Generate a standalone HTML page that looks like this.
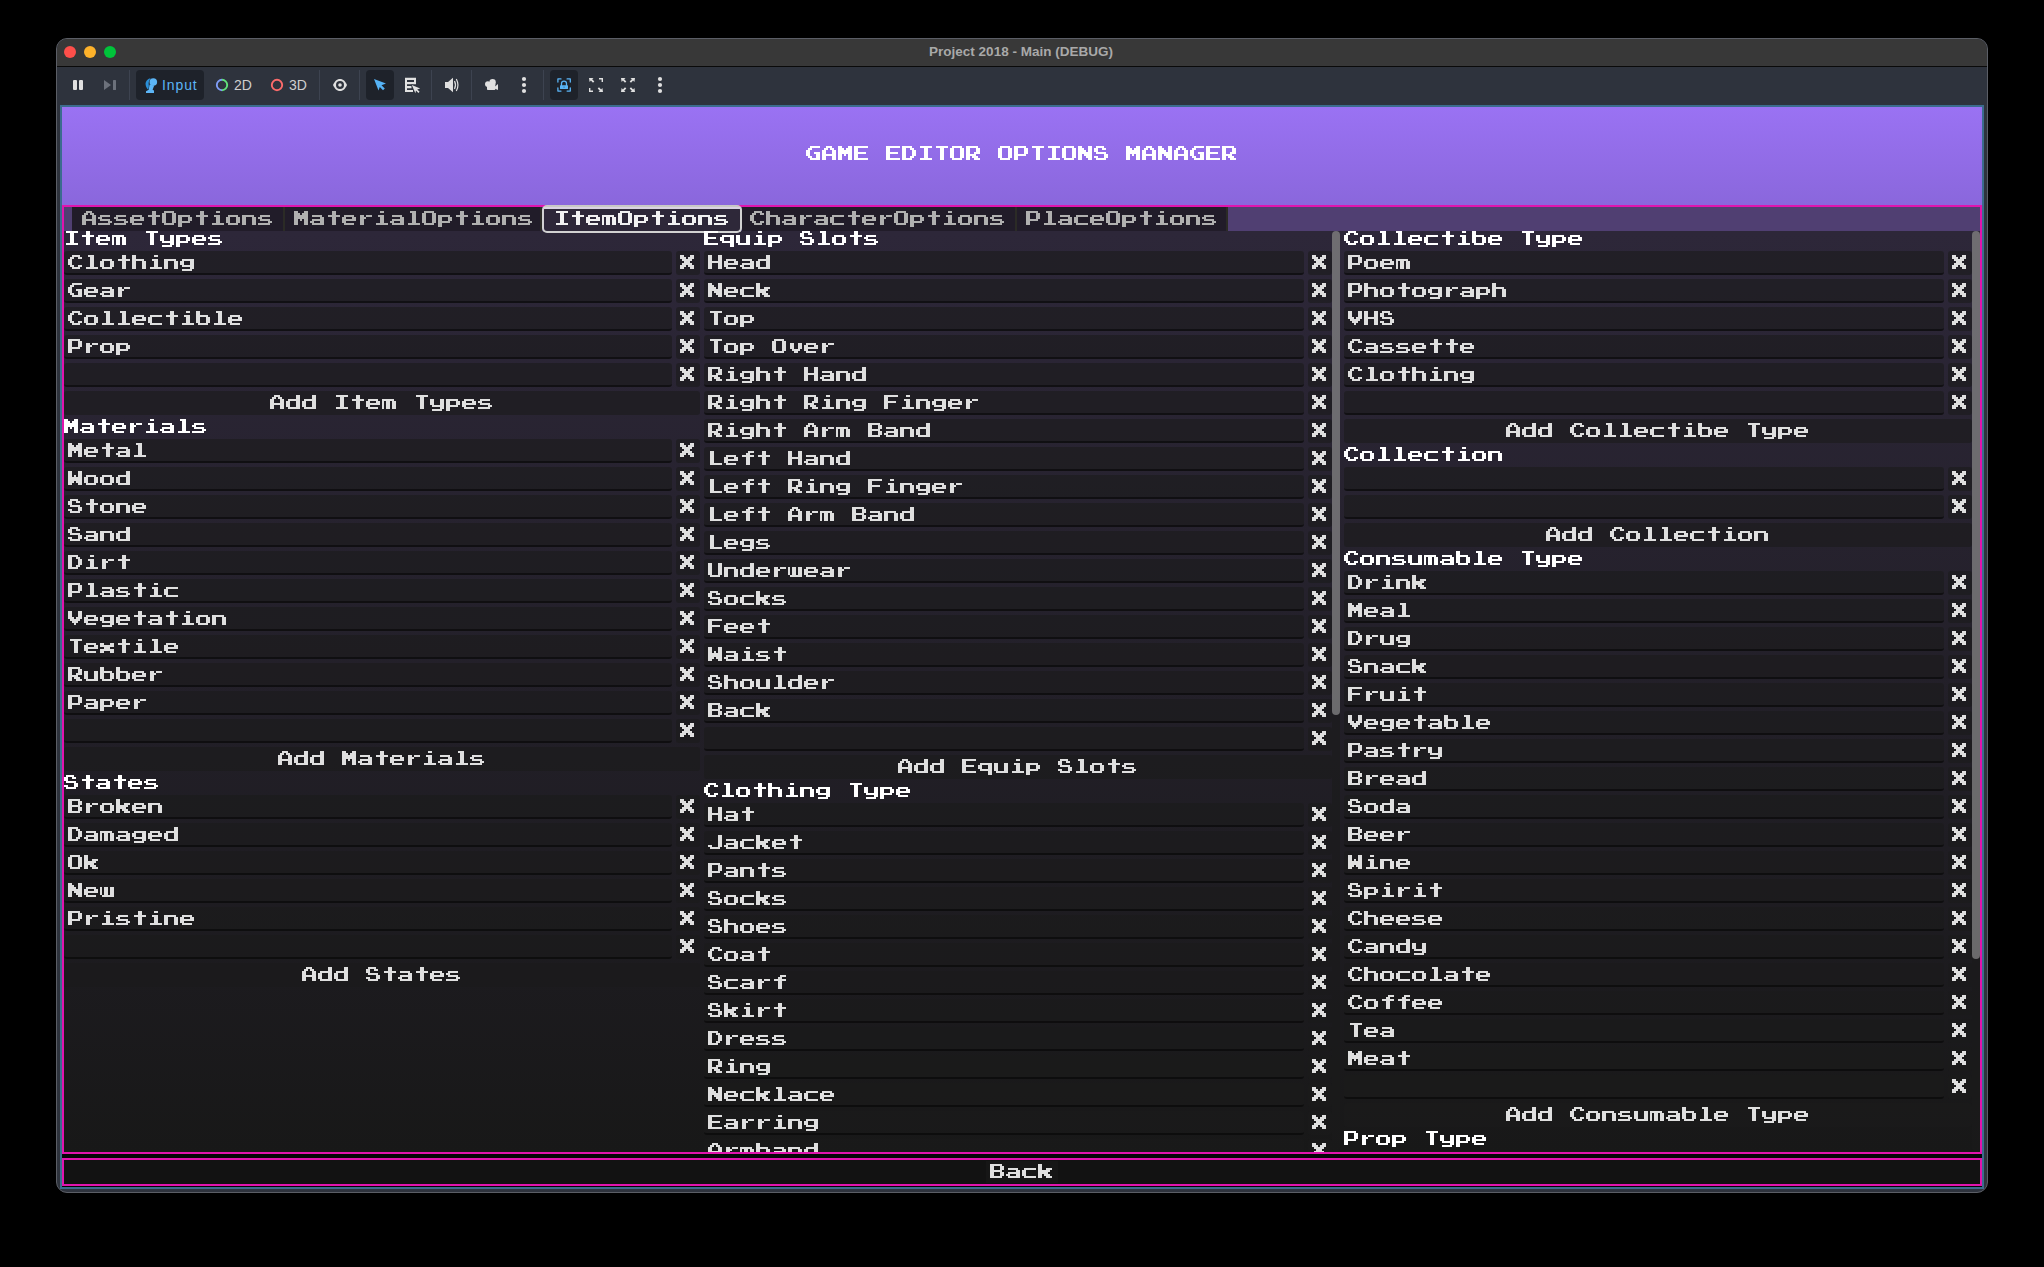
<!DOCTYPE html>
<html><head><meta charset="utf-8">
<style>
html,body{margin:0;padding:0;background:#000;width:2044px;height:1267px;overflow:hidden;position:relative}
div{position:absolute;box-sizing:border-box}
svg.pt{position:absolute;display:block;overflow:visible}
.t{font-family:"Liberation Mono";font-weight:bold;font-size:20.6px;line-height:20.6px;white-space:pre;transform:scaleX(1.2945);transform-origin:0 0}
.ib{height:24px;background:rgba(26,26,26,0.6);border-radius:3px;border-bottom:2px solid rgba(0,0,0,0.45)}
.xb{width:24px;height:24px;background:rgba(26,26,26,0.6);border-radius:3px}
.xb svg{position:absolute;left:4px;top:4px;display:block}
.ab{height:24px;background:rgba(26,26,26,0.6);border-radius:3px}
.sb{width:8px;background:rgba(255,255,255,0.35);border-radius:4px}
.sbt{width:8px;background:rgba(26,26,26,0.6);border-radius:4px}
.tab{top:207px;height:24px;background:#211c29;border-right:2px solid #2b2b26}
.tabsel{top:205px;height:28px;background:#2e2839;border:2px solid #d2d2d2;border-top-color:#c8c8c6;border-radius:5px}
</style></head><body>
<svg width="0" height="0" style="position:absolute"><defs>
<path id="gA" d="M4 0h6v2h-6zM2 2h4v2h-4zM8 2h4v2h-4zM0 4h4v2h-4zM10 4h4v2h-4zM0 6h4v2h-4zM10 6h4v2h-4zM0 8h14v2h-14zM0 10h4v2h-4zM10 10h4v2h-4zM0 12h4v2h-4zM10 12h4v2h-4z"/>
<path id="gB" d="M0 0h12v2h-12zM0 2h4v2h-4zM10 2h4v2h-4zM0 4h4v2h-4zM10 4h4v2h-4zM0 6h12v2h-12zM0 8h4v2h-4zM10 8h4v2h-4zM0 10h4v2h-4zM10 10h4v2h-4zM0 12h12v2h-12z"/>
<path id="gC" d="M4 0h8v2h-8zM2 2h4v2h-4zM10 2h4v2h-4zM0 4h4v2h-4zM0 6h4v2h-4zM0 8h4v2h-4zM2 10h4v2h-4zM10 10h4v2h-4zM4 12h8v2h-8z"/>
<path id="gD" d="M0 0h10v2h-10zM0 2h4v2h-4zM8 2h4v2h-4zM0 4h4v2h-4zM10 4h4v2h-4zM0 6h4v2h-4zM10 6h4v2h-4zM0 8h4v2h-4zM10 8h4v2h-4zM0 10h4v2h-4zM8 10h4v2h-4zM0 12h10v2h-10z"/>
<path id="gE" d="M0 0h14v2h-14zM0 2h4v2h-4zM0 4h4v2h-4zM0 6h12v2h-12zM0 8h4v2h-4zM0 10h4v2h-4zM0 12h14v2h-14z"/>
<path id="gF" d="M0 0h14v2h-14zM0 2h4v2h-4zM0 4h4v2h-4zM0 6h12v2h-12zM0 8h4v2h-4zM0 10h4v2h-4zM0 12h4v2h-4z"/>
<path id="gG" d="M4 0h10v2h-10zM2 2h4v2h-4zM0 4h4v2h-4zM0 6h4v2h-4zM8 6h6v2h-6zM0 8h4v2h-4zM10 8h4v2h-4zM2 10h4v2h-4zM10 10h4v2h-4zM4 12h10v2h-10z"/>
<path id="gH" d="M0 0h4v2h-4zM10 0h4v2h-4zM0 2h4v2h-4zM10 2h4v2h-4zM0 4h4v2h-4zM10 4h4v2h-4zM0 6h14v2h-14zM0 8h4v2h-4zM10 8h4v2h-4zM0 10h4v2h-4zM10 10h4v2h-4zM0 12h4v2h-4zM10 12h4v2h-4z"/>
<path id="gI" d="M2 0h12v2h-12zM6 2h4v2h-4zM6 4h4v2h-4zM6 6h4v2h-4zM6 8h4v2h-4zM6 10h4v2h-4zM2 12h12v2h-12z"/>
<path id="gJ" d="M10 0h4v2h-4zM10 2h4v2h-4zM10 4h4v2h-4zM10 6h4v2h-4zM10 8h4v2h-4zM0 10h4v2h-4zM10 10h4v2h-4zM2 12h10v2h-10z"/>
<path id="gL" d="M2 0h4v2h-4zM2 2h4v2h-4zM2 4h4v2h-4zM2 6h4v2h-4zM2 8h4v2h-4zM2 10h4v2h-4zM2 12h12v2h-12z"/>
<path id="gM" d="M0 0h4v2h-4zM10 0h4v2h-4zM0 2h6v2h-6zM8 2h6v2h-6zM0 4h14v2h-14zM0 6h14v2h-14zM0 8h4v2h-4zM6 8h2v2h-2zM10 8h4v2h-4zM0 10h4v2h-4zM10 10h4v2h-4zM0 12h4v2h-4zM10 12h4v2h-4z"/>
<path id="gN" d="M0 0h4v2h-4zM10 0h4v2h-4zM0 2h6v2h-6zM10 2h4v2h-4zM0 4h8v2h-8zM10 4h4v2h-4zM0 6h14v2h-14zM0 8h4v2h-4zM6 8h8v2h-8zM0 10h4v2h-4zM8 10h6v2h-6zM0 12h4v2h-4zM10 12h4v2h-4z"/>
<path id="gO" d="M2 0h10v2h-10zM0 2h4v2h-4zM10 2h4v2h-4zM0 4h4v2h-4zM10 4h4v2h-4zM0 6h4v2h-4zM10 6h4v2h-4zM0 8h4v2h-4zM10 8h4v2h-4zM0 10h4v2h-4zM10 10h4v2h-4zM2 12h10v2h-10z"/>
<path id="gP" d="M0 0h12v2h-12zM0 2h4v2h-4zM10 2h4v2h-4zM0 4h4v2h-4zM10 4h4v2h-4zM0 6h4v2h-4zM10 6h4v2h-4zM0 8h12v2h-12zM0 10h4v2h-4zM0 12h4v2h-4z"/>
<path id="gR" d="M0 0h12v2h-12zM0 2h4v2h-4zM10 2h4v2h-4zM0 4h4v2h-4zM10 4h4v2h-4zM0 6h4v2h-4zM8 6h6v2h-6zM0 8h10v2h-10zM0 10h4v2h-4zM6 10h6v2h-6zM0 12h4v2h-4zM8 12h6v2h-6z"/>
<path id="gS" d="M2 0h8v2h-8zM0 2h4v2h-4zM8 2h4v2h-4zM0 4h4v2h-4zM2 6h10v2h-10zM10 8h4v2h-4zM0 10h4v2h-4zM10 10h4v2h-4zM2 12h10v2h-10z"/>
<path id="gT" d="M2 0h12v2h-12zM6 2h4v2h-4zM6 4h4v2h-4zM6 6h4v2h-4zM6 8h4v2h-4zM6 10h4v2h-4zM6 12h4v2h-4z"/>
<path id="gU" d="M0 0h4v2h-4zM10 0h4v2h-4zM0 2h4v2h-4zM10 2h4v2h-4zM0 4h4v2h-4zM10 4h4v2h-4zM0 6h4v2h-4zM10 6h4v2h-4zM0 8h4v2h-4zM10 8h4v2h-4zM0 10h4v2h-4zM10 10h4v2h-4zM2 12h10v2h-10z"/>
<path id="gV" d="M0 0h4v2h-4zM10 0h4v2h-4zM0 2h4v2h-4zM10 2h4v2h-4zM0 4h4v2h-4zM10 4h4v2h-4zM0 6h6v2h-6zM8 6h6v2h-6zM2 8h10v2h-10zM4 10h6v2h-6zM6 12h2v2h-2z"/>
<path id="gW" d="M0 0h4v2h-4zM10 0h4v2h-4zM0 2h4v2h-4zM10 2h4v2h-4zM0 4h4v2h-4zM6 4h2v2h-2zM10 4h4v2h-4zM0 6h14v2h-14zM0 8h14v2h-14zM0 10h6v2h-6zM8 10h6v2h-6zM0 12h4v2h-4zM10 12h4v2h-4z"/>
<path id="ga_" d="M2 4h10v2h-10zM10 6h4v2h-4zM2 8h12v2h-12zM0 10h4v2h-4zM10 10h4v2h-4zM2 12h12v2h-12z"/>
<path id="gb_" d="M0 0h4v2h-4zM0 2h4v2h-4zM0 4h12v2h-12zM0 6h4v2h-4zM10 6h4v2h-4zM0 8h4v2h-4zM10 8h4v2h-4zM0 10h4v2h-4zM10 10h4v2h-4zM2 12h10v2h-10z"/>
<path id="gc_" d="M2 4h12v2h-12zM0 6h4v2h-4zM0 8h4v2h-4zM0 10h4v2h-4zM2 12h12v2h-12z"/>
<path id="gd_" d="M10 0h4v2h-4zM10 2h4v2h-4zM2 4h12v2h-12zM0 6h4v2h-4zM10 6h4v2h-4zM0 8h4v2h-4zM10 8h4v2h-4zM0 10h4v2h-4zM10 10h4v2h-4zM2 12h12v2h-12z"/>
<path id="ge_" d="M2 4h10v2h-10zM0 6h4v2h-4zM10 6h4v2h-4zM0 8h14v2h-14zM0 10h4v2h-4zM2 12h10v2h-10z"/>
<path id="gf_" d="M8 0h6v2h-6zM6 2h4v2h-4zM2 4h12v2h-12zM6 6h4v2h-4zM6 8h4v2h-4zM6 10h4v2h-4zM6 12h4v2h-4z"/>
<path id="gg_" d="M2 4h12v2h-12zM0 6h4v2h-4zM10 6h4v2h-4zM0 8h4v2h-4zM10 8h4v2h-4zM2 10h12v2h-12zM10 12h4v2h-4zM2 14h10v2h-10z"/>
<path id="gh_" d="M0 0h4v2h-4zM0 2h4v2h-4zM0 4h12v2h-12zM0 6h4v2h-4zM10 6h4v2h-4zM0 8h4v2h-4zM10 8h4v2h-4zM0 10h4v2h-4zM10 10h4v2h-4zM0 12h4v2h-4zM10 12h4v2h-4z"/>
<path id="gi_" d="M6 0h4v2h-4zM4 4h6v2h-6zM6 6h4v2h-4zM6 8h4v2h-4zM6 10h4v2h-4zM2 12h12v2h-12z"/>
<path id="gk_" d="M0 0h4v2h-4zM0 2h4v2h-4zM0 4h4v2h-4zM8 4h6v2h-6zM0 6h12v2h-12zM0 8h10v2h-10zM0 10h4v2h-4zM6 10h6v2h-6zM0 12h4v2h-4zM8 12h6v2h-6z"/>
<path id="gl_" d="M4 0h6v2h-6zM6 2h4v2h-4zM6 4h4v2h-4zM6 6h4v2h-4zM6 8h4v2h-4zM6 10h4v2h-4zM2 12h12v2h-12z"/>
<path id="gm_" d="M0 4h12v2h-12zM0 6h2v2h-2zM4 6h4v2h-4zM10 6h4v2h-4zM0 8h2v2h-2zM4 8h4v2h-4zM10 8h4v2h-4zM0 10h2v2h-2zM4 10h4v2h-4zM10 10h4v2h-4zM0 12h2v2h-2zM4 12h4v2h-4zM10 12h4v2h-4z"/>
<path id="gn_" d="M0 4h12v2h-12zM0 6h4v2h-4zM10 6h4v2h-4zM0 8h4v2h-4zM10 8h4v2h-4zM0 10h4v2h-4zM10 10h4v2h-4zM0 12h4v2h-4zM10 12h4v2h-4z"/>
<path id="go_" d="M2 4h10v2h-10zM0 6h4v2h-4zM10 6h4v2h-4zM0 8h4v2h-4zM10 8h4v2h-4zM0 10h4v2h-4zM10 10h4v2h-4zM2 12h10v2h-10z"/>
<path id="gp_" d="M0 4h12v2h-12zM0 6h4v2h-4zM10 6h4v2h-4zM0 8h4v2h-4zM10 8h4v2h-4zM0 10h12v2h-12zM0 12h4v2h-4zM0 14h4v2h-4z"/>
<path id="gq_" d="M2 4h12v2h-12zM0 6h4v2h-4zM10 6h4v2h-4zM0 8h4v2h-4zM10 8h4v2h-4zM2 10h12v2h-12zM10 12h4v2h-4zM10 14h4v2h-4z"/>
<path id="gr_" d="M2 4h4v2h-4zM8 4h6v2h-6zM2 6h6v2h-6zM2 8h4v2h-4zM2 10h4v2h-4zM2 12h4v2h-4z"/>
<path id="gs_" d="M2 4h10v2h-10zM0 6h4v2h-4zM2 8h10v2h-10zM10 10h4v2h-4zM0 12h12v2h-12z"/>
<path id="gt_" d="M6 0h4v2h-4zM6 2h4v2h-4zM2 4h12v2h-12zM6 6h4v2h-4zM6 8h4v2h-4zM6 10h4v2h-4zM6 12h4v2h-4z"/>
<path id="gu_" d="M0 4h4v2h-4zM10 4h4v2h-4zM0 6h4v2h-4zM10 6h4v2h-4zM0 8h4v2h-4zM10 8h4v2h-4zM0 10h4v2h-4zM10 10h4v2h-4zM2 12h12v2h-12z"/>
<path id="gv_" d="M2 4h4v2h-4zM10 4h4v2h-4zM2 6h4v2h-4zM10 6h4v2h-4zM2 8h4v2h-4zM10 8h4v2h-4zM4 10h8v2h-8zM6 12h4v2h-4z"/>
<path id="gw_" d="M0 4h2v2h-2zM4 4h4v2h-4zM10 4h4v2h-4zM0 6h2v2h-2zM4 6h4v2h-4zM10 6h4v2h-4zM0 8h2v2h-2zM4 8h4v2h-4zM10 8h4v2h-4zM0 10h2v2h-2zM4 10h4v2h-4zM10 10h4v2h-4zM2 12h12v2h-12z"/>
<path id="gx_" d="M0 4h4v2h-4zM10 4h4v2h-4zM0 6h14v2h-14zM4 8h6v2h-6zM0 10h14v2h-14zM0 12h4v2h-4zM10 12h4v2h-4z"/>
<path id="gy_" d="M0 4h4v2h-4zM10 4h4v2h-4zM0 6h4v2h-4zM10 6h4v2h-4zM0 8h4v2h-4zM10 8h4v2h-4zM2 10h12v2h-12zM10 12h4v2h-4zM2 14h10v2h-10z"/>
<path id="gX" d="M0 0h4v2h-4zM10 0h4v2h-4zM0 2h6v2h-6zM8 2h6v2h-6zM2 4h10v2h-10zM4 6h6v2h-6zM2 8h10v2h-10zM0 10h6v2h-6zM8 10h6v2h-6zM0 12h4v2h-4zM10 12h4v2h-4z"/>
</defs></svg>

<!-- window -->
<div style="left:56px;top:38px;width:1932px;height:1155px;border-radius:11px;background:#2e333d;border:1px solid #5b5e66;overflow:hidden">
  <div style="left:0;top:0;width:100%;height:28px;background:#383838;border-bottom:1px solid #0a0a0a"></div>
</div>
<div style="left:64px;top:46px;width:12px;height:12px;border-radius:50%;background:#fe4f4a"></div>
<div style="left:84px;top:46px;width:12px;height:12px;border-radius:50%;background:#feb22a"></div>
<div style="left:104px;top:46px;width:12px;height:12px;border-radius:50%;background:#00c43a"></div>
<div style="left:0;top:43.5px;width:2042px;text-align:center;font-family:'Liberation Sans',sans-serif;font-weight:bold;font-size:13.5px;line-height:16px;color:#a9a9a9">Project 2018 - Main (DEBUG)</div>

<!-- toolbar -->
<svg style="position:absolute;left:0;top:0" width="700" height="105" viewBox="0 0 700 105">
<g fill="#3d4350">
<rect x="129" y="70" width="1" height="30"/><rect x="319" y="70" width="1" height="30"/><rect x="359" y="70" width="1" height="30"/>
<rect x="431" y="70" width="1" height="30"/><rect x="471" y="70" width="1" height="30"/><rect x="543" y="70" width="1" height="30"/>
</g>
<g fill="#1e222a"><rect x="136" y="70" width="68" height="30" rx="4"/><rect x="366" y="70" width="28" height="30" rx="4"/><rect x="550" y="70" width="28" height="30" rx="4"/></g>
<g fill="#e0e0e0"><rect x="73" y="80" width="4" height="10" rx="1"/><rect x="79" y="80" width="4" height="10" rx="1"/></g>
<g fill="#6c717b"><polygon points="104,80 111,85 104,90"/><rect x="113" y="80" width="3" height="10" rx="0.5"/></g>
<!-- input icon -->
<path d="M150.6,78.3 C147.4,79 145.3,81.6 145.6,84.6 C145.9,87 147,88.6 148.1,89.6 C148.7,88 149,86.6 148.8,85 C148.4,83.4 148.6,81 150.6,78.3 Z" fill="#2a8fd8"/>
<circle cx="153.3" cy="82" r="3.8" fill="#5cb5f6"/>
<path d="M149.6,84.6 L154.2,85.4 L152.6,89.8 L154,90.5 L154,93 L146,93 L146,91.2 L148.7,89.8 Z" fill="#5cb5f6"/>
<text x="162" y="90" font-family="Liberation Sans" font-size="14" letter-spacing="0.9" fill="#5cb5f6">Input</text>
<!-- 2D ring -->
<path d="M222,79.8 A5.2,5.2 0 0 0 222,90.2" stroke="#7f9cf6" stroke-width="1.9" fill="none"/>
<path d="M222,79.8 A5.2,5.2 0 0 1 222,90.2" stroke="#62e27b" stroke-width="1.9" fill="none"/>
<text x="234" y="90" font-family="Liberation Sans" font-size="14" fill="#cfcfcf">2D</text>
<circle cx="277" cy="85" r="5.2" stroke="#fc6b6b" stroke-width="1.9" fill="none"/>
<text x="289" y="90" font-family="Liberation Sans" font-size="14" fill="#cfcfcf">3D</text>
<!-- eye -->
<path d="M333,85 C335,80.5 337.5,79 340,79 C342.5,79 345,80.5 347,85 C345,89.5 342.5,91 340,91 C337.5,91 335,89.5 333,85 Z" fill="#e0e0e0"/>
<circle cx="340" cy="85" r="4" fill="#2e333d"/><circle cx="340" cy="85" r="1.8" fill="#e0e0e0"/>
<!-- select arrow -->
<polygon points="374,79 386,83.6 381.5,85.2 384.8,88.5 383,90.2 379.8,87 378.5,90.6" fill="#56b3f5"/>
<!-- list select -->
<path fill="#e2e2e2" d="M405,77.7 H416 V84.2 H407 V85.9 H411.5 V88.2 H407 V89.9 H413 V92 H405 Z M407,80 V82 H414 V80 Z" fill-rule="evenodd"/>
<polygon points="411.8,85 420.2,88.4 417.2,89.4 419.6,91.8 418.4,93 416,90.6 415.4,93.2" fill="#e2e2e2" stroke="#2e333d" stroke-width="1.2" paint-order="stroke" stroke-linejoin="round"/>
<!-- speaker -->
<g fill="#e0e0e0">
<polygon points="445,82 448,82 453,77.7 453,92.2 448,88 445,88"/>
</g>
<g stroke="#e0e0e0" stroke-width="1.2" fill="none">
<path d="M454.5,81 Q456.5,85 454.5,89"/><path d="M456.3,79 Q459.6,85 456.3,91"/>
</g>
<!-- camera -->
<g fill="#e0e0e0">
<circle cx="487.9" cy="84.1" r="2.9"/><circle cx="492.6" cy="82.2" r="3.2"/>
<rect x="487" y="83.5" width="8.3" height="6.5" rx="0.8"/>
<polygon points="495,86.6 498,84 498,90 495,88.8"/>
</g>
<g fill="#e0e0e0"><circle cx="524" cy="79" r="2.1"/><circle cx="524" cy="85" r="2.1"/><circle cx="524" cy="91" r="2.1"/>
<circle cx="660" cy="79" r="2.1"/><circle cx="660" cy="85" r="2.1"/><circle cx="660" cy="91" r="2.1"/></g>
<!-- lock -->
<g stroke="#5ab4f5" stroke-width="1.3" fill="none" stroke-linecap="round" stroke-linejoin="round">
<path d="M557.9,82 V78.9 H561"/><path d="M567.1,78.9 H570.3 V82"/>
<path d="M557.9,88 V91.1 H561"/><path d="M567.1,91.1 H570.3 V88"/>
<path d="M561.5,85.6 V83.6 A2.5,2.5 0 0 1 566.5,83.6 V85.6"/>
</g>
<rect x="560" y="85.2" width="8" height="3.9" rx="0.6" fill="#5ab4f5"/><rect x="563.4" y="86.5" width="1.3" height="1.3" fill="#3f80b0"/>
<!-- fullscreen 1 -->
<g fill="#e0e0e0">
<polygon points="589,78 593.5,78 592.2,79.3 594.3,81.4 593,82.7 590.9,80.6 589.6,81.9"/>
<path d="M599,78 L603,78 L603,82 L601.6,82 L601.6,79.4 L599,79.4 Z"/>
<path d="M589,88 L590.4,88 L590.4,90.6 L593,90.6 L593,92 L589,92 Z"/>
<polygon points="603,92 598.5,92 599.8,90.7 597.7,88.6 599,87.3 601.1,89.4 602.4,88.1"/>
<!-- fullscreen 2 -->
<polygon points="621,78 625.5,78 624.2,79.3 626.3,81.4 625,82.7 622.9,80.6 621.6,81.9"/>
<polygon points="635,78 630.5,78 631.8,79.3 629.7,81.4 631,82.7 633.1,80.6 634.4,81.9"/>
<polygon points="621,92 625.5,92 624.2,90.7 626.3,88.6 625,87.3 622.9,89.4 621.6,88.1"/>
<polygon points="635,92 630.5,92 631.8,90.7 629.7,88.6 631,87.3 633.1,89.4 634.4,88.1"/>
</g>
</svg>


<!-- viewport -->
<div style="left:60px;top:105px;width:1924px;height:1084px;border:2px solid #3b6c8e;background:#050508"></div>
<div style="left:62px;top:107px;width:1920px;height:98px;background:linear-gradient(#9a72f3,#8a67dc)"></div>
<div style="left:62px;top:205px;width:1920px;height:949px;border:2px solid #e014ae;background:linear-gradient(#2d2739 2.7%,#181818 100%)"></div>
<div style="left:64px;top:207px;width:1916px;height:24px;background:#503f72"></div>
<div class="tab" style="left:72px;width:213px"></div>
<svg class="pt" style="left:82px;top:211px" width="192" height="16" fill="#b0b0b0"><use href="#gA" x="0"/><use href="#gs_" x="16"/><use href="#gs_" x="32"/><use href="#ge_" x="48"/><use href="#gt_" x="64"/><use href="#gO" x="80"/><use href="#gp_" x="96"/><use href="#gt_" x="112"/><use href="#gi_" x="128"/><use href="#go_" x="144"/><use href="#gn_" x="160"/><use href="#gs_" x="176"/></svg>
<div class="tab" style="left:285px;width:257px"></div>
<svg class="pt" style="left:294px;top:211px" width="240" height="16" fill="#b0b0b0"><use href="#gM" x="0"/><use href="#ga_" x="16"/><use href="#gt_" x="32"/><use href="#ge_" x="48"/><use href="#gr_" x="64"/><use href="#gi_" x="80"/><use href="#ga_" x="96"/><use href="#gl_" x="112"/><use href="#gO" x="128"/><use href="#gp_" x="144"/><use href="#gt_" x="160"/><use href="#gi_" x="176"/><use href="#go_" x="192"/><use href="#gn_" x="208"/><use href="#gs_" x="224"/></svg>
<div class="tabsel" style="left:542px;width:200px"></div>
<div style="left:544px;top:207px;width:196px;height:2px;background:#d9d3e2"></div>
<svg class="pt" style="left:554px;top:211px" width="176" height="16" fill="#f2f2f2"><use href="#gI" x="0"/><use href="#gt_" x="16"/><use href="#ge_" x="32"/><use href="#gm_" x="48"/><use href="#gO" x="64"/><use href="#gp_" x="80"/><use href="#gt_" x="96"/><use href="#gi_" x="112"/><use href="#go_" x="128"/><use href="#gn_" x="144"/><use href="#gs_" x="160"/></svg>
<div class="tab" style="left:742px;width:275px"></div>
<svg class="pt" style="left:750px;top:211px" width="256" height="16" fill="#b0b0b0"><use href="#gC" x="0"/><use href="#gh_" x="16"/><use href="#ga_" x="32"/><use href="#gr_" x="48"/><use href="#ga_" x="64"/><use href="#gc_" x="80"/><use href="#gt_" x="96"/><use href="#ge_" x="112"/><use href="#gr_" x="128"/><use href="#gO" x="144"/><use href="#gp_" x="160"/><use href="#gt_" x="176"/><use href="#gi_" x="192"/><use href="#go_" x="208"/><use href="#gn_" x="224"/><use href="#gs_" x="240"/></svg>
<div class="tab" style="left:1017px;width:211px"></div>
<svg class="pt" style="left:1026px;top:211px" width="192" height="16" fill="#b0b0b0"><use href="#gP" x="0"/><use href="#gl_" x="16"/><use href="#ga_" x="32"/><use href="#gc_" x="48"/><use href="#ge_" x="64"/><use href="#gO" x="80"/><use href="#gp_" x="96"/><use href="#gt_" x="112"/><use href="#gi_" x="128"/><use href="#go_" x="144"/><use href="#gn_" x="160"/><use href="#gs_" x="176"/></svg>
<div style="left:64px;top:231px;width:1916px;height:921px;overflow:hidden">
<div style="left:-64px;top:-231px;width:2044px;height:1267px">
<svg class="pt" style="left:64px;top:231px" width="160" height="16" fill="#ffffff"><use href="#gI" x="0"/><use href="#gt_" x="16"/><use href="#ge_" x="32"/><use href="#gm_" x="48"/><use href="#gT" x="80"/><use href="#gy_" x="96"/><use href="#gp_" x="112"/><use href="#ge_" x="128"/><use href="#gs_" x="144"/></svg>
<div class="ib" style="left:64px;top:251px;width:608px"></div>
<div class="xb" style="left:676px;top:251px"><svg width="14" height="14" fill="#dfdfdf"><use href="#gX"/></svg></div>
<svg class="pt" style="left:68px;top:255px" width="128" height="16" fill="#dfdfdf"><use href="#gC" x="0"/><use href="#gl_" x="16"/><use href="#go_" x="32"/><use href="#gt_" x="48"/><use href="#gh_" x="64"/><use href="#gi_" x="80"/><use href="#gn_" x="96"/><use href="#gg_" x="112"/></svg>
<div class="ib" style="left:64px;top:279px;width:608px"></div>
<div class="xb" style="left:676px;top:279px"><svg width="14" height="14" fill="#dfdfdf"><use href="#gX"/></svg></div>
<svg class="pt" style="left:68px;top:283px" width="64" height="16" fill="#dfdfdf"><use href="#gG" x="0"/><use href="#ge_" x="16"/><use href="#ga_" x="32"/><use href="#gr_" x="48"/></svg>
<div class="ib" style="left:64px;top:307px;width:608px"></div>
<div class="xb" style="left:676px;top:307px"><svg width="14" height="14" fill="#dfdfdf"><use href="#gX"/></svg></div>
<svg class="pt" style="left:68px;top:311px" width="176" height="16" fill="#dfdfdf"><use href="#gC" x="0"/><use href="#go_" x="16"/><use href="#gl_" x="32"/><use href="#gl_" x="48"/><use href="#ge_" x="64"/><use href="#gc_" x="80"/><use href="#gt_" x="96"/><use href="#gi_" x="112"/><use href="#gb_" x="128"/><use href="#gl_" x="144"/><use href="#ge_" x="160"/></svg>
<div class="ib" style="left:64px;top:335px;width:608px"></div>
<div class="xb" style="left:676px;top:335px"><svg width="14" height="14" fill="#dfdfdf"><use href="#gX"/></svg></div>
<svg class="pt" style="left:68px;top:339px" width="64" height="16" fill="#dfdfdf"><use href="#gP" x="0"/><use href="#gr_" x="16"/><use href="#go_" x="32"/><use href="#gp_" x="48"/></svg>
<div class="ib" style="left:64px;top:363px;width:608px"></div>
<div class="xb" style="left:676px;top:363px"><svg width="14" height="14" fill="#dfdfdf"><use href="#gX"/></svg></div>
<div class="ab" style="left:64px;top:391px;width:636px"></div>
<svg class="pt" style="left:270px;top:395px" width="224" height="16" fill="#dfdfdf"><use href="#gA" x="0"/><use href="#gd_" x="16"/><use href="#gd_" x="32"/><use href="#gI" x="64"/><use href="#gt_" x="80"/><use href="#ge_" x="96"/><use href="#gm_" x="112"/><use href="#gT" x="144"/><use href="#gy_" x="160"/><use href="#gp_" x="176"/><use href="#ge_" x="192"/><use href="#gs_" x="208"/></svg>
<svg class="pt" style="left:64px;top:419px" width="144" height="16" fill="#ffffff"><use href="#gM" x="0"/><use href="#ga_" x="16"/><use href="#gt_" x="32"/><use href="#ge_" x="48"/><use href="#gr_" x="64"/><use href="#gi_" x="80"/><use href="#ga_" x="96"/><use href="#gl_" x="112"/><use href="#gs_" x="128"/></svg>
<div class="ib" style="left:64px;top:439px;width:608px"></div>
<div class="xb" style="left:676px;top:439px"><svg width="14" height="14" fill="#dfdfdf"><use href="#gX"/></svg></div>
<svg class="pt" style="left:68px;top:443px" width="80" height="16" fill="#dfdfdf"><use href="#gM" x="0"/><use href="#ge_" x="16"/><use href="#gt_" x="32"/><use href="#ga_" x="48"/><use href="#gl_" x="64"/></svg>
<div class="ib" style="left:64px;top:467px;width:608px"></div>
<div class="xb" style="left:676px;top:467px"><svg width="14" height="14" fill="#dfdfdf"><use href="#gX"/></svg></div>
<svg class="pt" style="left:68px;top:471px" width="64" height="16" fill="#dfdfdf"><use href="#gW" x="0"/><use href="#go_" x="16"/><use href="#go_" x="32"/><use href="#gd_" x="48"/></svg>
<div class="ib" style="left:64px;top:495px;width:608px"></div>
<div class="xb" style="left:676px;top:495px"><svg width="14" height="14" fill="#dfdfdf"><use href="#gX"/></svg></div>
<svg class="pt" style="left:68px;top:499px" width="80" height="16" fill="#dfdfdf"><use href="#gS" x="0"/><use href="#gt_" x="16"/><use href="#go_" x="32"/><use href="#gn_" x="48"/><use href="#ge_" x="64"/></svg>
<div class="ib" style="left:64px;top:523px;width:608px"></div>
<div class="xb" style="left:676px;top:523px"><svg width="14" height="14" fill="#dfdfdf"><use href="#gX"/></svg></div>
<svg class="pt" style="left:68px;top:527px" width="64" height="16" fill="#dfdfdf"><use href="#gS" x="0"/><use href="#ga_" x="16"/><use href="#gn_" x="32"/><use href="#gd_" x="48"/></svg>
<div class="ib" style="left:64px;top:551px;width:608px"></div>
<div class="xb" style="left:676px;top:551px"><svg width="14" height="14" fill="#dfdfdf"><use href="#gX"/></svg></div>
<svg class="pt" style="left:68px;top:555px" width="64" height="16" fill="#dfdfdf"><use href="#gD" x="0"/><use href="#gi_" x="16"/><use href="#gr_" x="32"/><use href="#gt_" x="48"/></svg>
<div class="ib" style="left:64px;top:579px;width:608px"></div>
<div class="xb" style="left:676px;top:579px"><svg width="14" height="14" fill="#dfdfdf"><use href="#gX"/></svg></div>
<svg class="pt" style="left:68px;top:583px" width="112" height="16" fill="#dfdfdf"><use href="#gP" x="0"/><use href="#gl_" x="16"/><use href="#ga_" x="32"/><use href="#gs_" x="48"/><use href="#gt_" x="64"/><use href="#gi_" x="80"/><use href="#gc_" x="96"/></svg>
<div class="ib" style="left:64px;top:607px;width:608px"></div>
<div class="xb" style="left:676px;top:607px"><svg width="14" height="14" fill="#dfdfdf"><use href="#gX"/></svg></div>
<svg class="pt" style="left:68px;top:611px" width="160" height="16" fill="#dfdfdf"><use href="#gV" x="0"/><use href="#ge_" x="16"/><use href="#gg_" x="32"/><use href="#ge_" x="48"/><use href="#gt_" x="64"/><use href="#ga_" x="80"/><use href="#gt_" x="96"/><use href="#gi_" x="112"/><use href="#go_" x="128"/><use href="#gn_" x="144"/></svg>
<div class="ib" style="left:64px;top:635px;width:608px"></div>
<div class="xb" style="left:676px;top:635px"><svg width="14" height="14" fill="#dfdfdf"><use href="#gX"/></svg></div>
<svg class="pt" style="left:68px;top:639px" width="112" height="16" fill="#dfdfdf"><use href="#gT" x="0"/><use href="#ge_" x="16"/><use href="#gx_" x="32"/><use href="#gt_" x="48"/><use href="#gi_" x="64"/><use href="#gl_" x="80"/><use href="#ge_" x="96"/></svg>
<div class="ib" style="left:64px;top:663px;width:608px"></div>
<div class="xb" style="left:676px;top:663px"><svg width="14" height="14" fill="#dfdfdf"><use href="#gX"/></svg></div>
<svg class="pt" style="left:68px;top:667px" width="96" height="16" fill="#dfdfdf"><use href="#gR" x="0"/><use href="#gu_" x="16"/><use href="#gb_" x="32"/><use href="#gb_" x="48"/><use href="#ge_" x="64"/><use href="#gr_" x="80"/></svg>
<div class="ib" style="left:64px;top:691px;width:608px"></div>
<div class="xb" style="left:676px;top:691px"><svg width="14" height="14" fill="#dfdfdf"><use href="#gX"/></svg></div>
<svg class="pt" style="left:68px;top:695px" width="80" height="16" fill="#dfdfdf"><use href="#gP" x="0"/><use href="#ga_" x="16"/><use href="#gp_" x="32"/><use href="#ge_" x="48"/><use href="#gr_" x="64"/></svg>
<div class="ib" style="left:64px;top:719px;width:608px"></div>
<div class="xb" style="left:676px;top:719px"><svg width="14" height="14" fill="#dfdfdf"><use href="#gX"/></svg></div>
<div class="ab" style="left:64px;top:747px;width:636px"></div>
<svg class="pt" style="left:278px;top:751px" width="208" height="16" fill="#dfdfdf"><use href="#gA" x="0"/><use href="#gd_" x="16"/><use href="#gd_" x="32"/><use href="#gM" x="64"/><use href="#ga_" x="80"/><use href="#gt_" x="96"/><use href="#ge_" x="112"/><use href="#gr_" x="128"/><use href="#gi_" x="144"/><use href="#ga_" x="160"/><use href="#gl_" x="176"/><use href="#gs_" x="192"/></svg>
<svg class="pt" style="left:64px;top:775px" width="96" height="16" fill="#ffffff"><use href="#gS" x="0"/><use href="#gt_" x="16"/><use href="#ga_" x="32"/><use href="#gt_" x="48"/><use href="#ge_" x="64"/><use href="#gs_" x="80"/></svg>
<div class="ib" style="left:64px;top:795px;width:608px"></div>
<div class="xb" style="left:676px;top:795px"><svg width="14" height="14" fill="#dfdfdf"><use href="#gX"/></svg></div>
<svg class="pt" style="left:68px;top:799px" width="96" height="16" fill="#dfdfdf"><use href="#gB" x="0"/><use href="#gr_" x="16"/><use href="#go_" x="32"/><use href="#gk_" x="48"/><use href="#ge_" x="64"/><use href="#gn_" x="80"/></svg>
<div class="ib" style="left:64px;top:823px;width:608px"></div>
<div class="xb" style="left:676px;top:823px"><svg width="14" height="14" fill="#dfdfdf"><use href="#gX"/></svg></div>
<svg class="pt" style="left:68px;top:827px" width="112" height="16" fill="#dfdfdf"><use href="#gD" x="0"/><use href="#ga_" x="16"/><use href="#gm_" x="32"/><use href="#ga_" x="48"/><use href="#gg_" x="64"/><use href="#ge_" x="80"/><use href="#gd_" x="96"/></svg>
<div class="ib" style="left:64px;top:851px;width:608px"></div>
<div class="xb" style="left:676px;top:851px"><svg width="14" height="14" fill="#dfdfdf"><use href="#gX"/></svg></div>
<svg class="pt" style="left:68px;top:855px" width="32" height="16" fill="#dfdfdf"><use href="#gO" x="0"/><use href="#gk_" x="16"/></svg>
<div class="ib" style="left:64px;top:879px;width:608px"></div>
<div class="xb" style="left:676px;top:879px"><svg width="14" height="14" fill="#dfdfdf"><use href="#gX"/></svg></div>
<svg class="pt" style="left:68px;top:883px" width="48" height="16" fill="#dfdfdf"><use href="#gN" x="0"/><use href="#ge_" x="16"/><use href="#gw_" x="32"/></svg>
<div class="ib" style="left:64px;top:907px;width:608px"></div>
<div class="xb" style="left:676px;top:907px"><svg width="14" height="14" fill="#dfdfdf"><use href="#gX"/></svg></div>
<svg class="pt" style="left:68px;top:911px" width="128" height="16" fill="#dfdfdf"><use href="#gP" x="0"/><use href="#gr_" x="16"/><use href="#gi_" x="32"/><use href="#gs_" x="48"/><use href="#gt_" x="64"/><use href="#gi_" x="80"/><use href="#gn_" x="96"/><use href="#ge_" x="112"/></svg>
<div class="ib" style="left:64px;top:935px;width:608px"></div>
<div class="xb" style="left:676px;top:935px"><svg width="14" height="14" fill="#dfdfdf"><use href="#gX"/></svg></div>
<div class="ab" style="left:64px;top:963px;width:636px"></div>
<svg class="pt" style="left:302px;top:967px" width="160" height="16" fill="#dfdfdf"><use href="#gA" x="0"/><use href="#gd_" x="16"/><use href="#gd_" x="32"/><use href="#gS" x="64"/><use href="#gt_" x="80"/><use href="#ga_" x="96"/><use href="#gt_" x="112"/><use href="#ge_" x="128"/><use href="#gs_" x="144"/></svg>
<svg class="pt" style="left:704px;top:231px" width="176" height="16" fill="#ffffff"><use href="#gE" x="0"/><use href="#gq_" x="16"/><use href="#gu_" x="32"/><use href="#gi_" x="48"/><use href="#gp_" x="64"/><use href="#gS" x="96"/><use href="#gl_" x="112"/><use href="#go_" x="128"/><use href="#gt_" x="144"/><use href="#gs_" x="160"/></svg>
<div class="ib" style="left:704px;top:251px;width:600px"></div>
<div class="xb" style="left:1308px;top:251px"><svg width="14" height="14" fill="#dfdfdf"><use href="#gX"/></svg></div>
<svg class="pt" style="left:708px;top:255px" width="64" height="16" fill="#dfdfdf"><use href="#gH" x="0"/><use href="#ge_" x="16"/><use href="#ga_" x="32"/><use href="#gd_" x="48"/></svg>
<div class="ib" style="left:704px;top:279px;width:600px"></div>
<div class="xb" style="left:1308px;top:279px"><svg width="14" height="14" fill="#dfdfdf"><use href="#gX"/></svg></div>
<svg class="pt" style="left:708px;top:283px" width="64" height="16" fill="#dfdfdf"><use href="#gN" x="0"/><use href="#ge_" x="16"/><use href="#gc_" x="32"/><use href="#gk_" x="48"/></svg>
<div class="ib" style="left:704px;top:307px;width:600px"></div>
<div class="xb" style="left:1308px;top:307px"><svg width="14" height="14" fill="#dfdfdf"><use href="#gX"/></svg></div>
<svg class="pt" style="left:708px;top:311px" width="48" height="16" fill="#dfdfdf"><use href="#gT" x="0"/><use href="#go_" x="16"/><use href="#gp_" x="32"/></svg>
<div class="ib" style="left:704px;top:335px;width:600px"></div>
<div class="xb" style="left:1308px;top:335px"><svg width="14" height="14" fill="#dfdfdf"><use href="#gX"/></svg></div>
<svg class="pt" style="left:708px;top:339px" width="128" height="16" fill="#dfdfdf"><use href="#gT" x="0"/><use href="#go_" x="16"/><use href="#gp_" x="32"/><use href="#gO" x="64"/><use href="#gv_" x="80"/><use href="#ge_" x="96"/><use href="#gr_" x="112"/></svg>
<div class="ib" style="left:704px;top:363px;width:600px"></div>
<div class="xb" style="left:1308px;top:363px"><svg width="14" height="14" fill="#dfdfdf"><use href="#gX"/></svg></div>
<svg class="pt" style="left:708px;top:367px" width="160" height="16" fill="#dfdfdf"><use href="#gR" x="0"/><use href="#gi_" x="16"/><use href="#gg_" x="32"/><use href="#gh_" x="48"/><use href="#gt_" x="64"/><use href="#gH" x="96"/><use href="#ga_" x="112"/><use href="#gn_" x="128"/><use href="#gd_" x="144"/></svg>
<div class="ib" style="left:704px;top:391px;width:600px"></div>
<div class="xb" style="left:1308px;top:391px"><svg width="14" height="14" fill="#dfdfdf"><use href="#gX"/></svg></div>
<svg class="pt" style="left:708px;top:395px" width="272" height="16" fill="#dfdfdf"><use href="#gR" x="0"/><use href="#gi_" x="16"/><use href="#gg_" x="32"/><use href="#gh_" x="48"/><use href="#gt_" x="64"/><use href="#gR" x="96"/><use href="#gi_" x="112"/><use href="#gn_" x="128"/><use href="#gg_" x="144"/><use href="#gF" x="176"/><use href="#gi_" x="192"/><use href="#gn_" x="208"/><use href="#gg_" x="224"/><use href="#ge_" x="240"/><use href="#gr_" x="256"/></svg>
<div class="ib" style="left:704px;top:419px;width:600px"></div>
<div class="xb" style="left:1308px;top:419px"><svg width="14" height="14" fill="#dfdfdf"><use href="#gX"/></svg></div>
<svg class="pt" style="left:708px;top:423px" width="224" height="16" fill="#dfdfdf"><use href="#gR" x="0"/><use href="#gi_" x="16"/><use href="#gg_" x="32"/><use href="#gh_" x="48"/><use href="#gt_" x="64"/><use href="#gA" x="96"/><use href="#gr_" x="112"/><use href="#gm_" x="128"/><use href="#gB" x="160"/><use href="#ga_" x="176"/><use href="#gn_" x="192"/><use href="#gd_" x="208"/></svg>
<div class="ib" style="left:704px;top:447px;width:600px"></div>
<div class="xb" style="left:1308px;top:447px"><svg width="14" height="14" fill="#dfdfdf"><use href="#gX"/></svg></div>
<svg class="pt" style="left:708px;top:451px" width="144" height="16" fill="#dfdfdf"><use href="#gL" x="0"/><use href="#ge_" x="16"/><use href="#gf_" x="32"/><use href="#gt_" x="48"/><use href="#gH" x="80"/><use href="#ga_" x="96"/><use href="#gn_" x="112"/><use href="#gd_" x="128"/></svg>
<div class="ib" style="left:704px;top:475px;width:600px"></div>
<div class="xb" style="left:1308px;top:475px"><svg width="14" height="14" fill="#dfdfdf"><use href="#gX"/></svg></div>
<svg class="pt" style="left:708px;top:479px" width="256" height="16" fill="#dfdfdf"><use href="#gL" x="0"/><use href="#ge_" x="16"/><use href="#gf_" x="32"/><use href="#gt_" x="48"/><use href="#gR" x="80"/><use href="#gi_" x="96"/><use href="#gn_" x="112"/><use href="#gg_" x="128"/><use href="#gF" x="160"/><use href="#gi_" x="176"/><use href="#gn_" x="192"/><use href="#gg_" x="208"/><use href="#ge_" x="224"/><use href="#gr_" x="240"/></svg>
<div class="ib" style="left:704px;top:503px;width:600px"></div>
<div class="xb" style="left:1308px;top:503px"><svg width="14" height="14" fill="#dfdfdf"><use href="#gX"/></svg></div>
<svg class="pt" style="left:708px;top:507px" width="208" height="16" fill="#dfdfdf"><use href="#gL" x="0"/><use href="#ge_" x="16"/><use href="#gf_" x="32"/><use href="#gt_" x="48"/><use href="#gA" x="80"/><use href="#gr_" x="96"/><use href="#gm_" x="112"/><use href="#gB" x="144"/><use href="#ga_" x="160"/><use href="#gn_" x="176"/><use href="#gd_" x="192"/></svg>
<div class="ib" style="left:704px;top:531px;width:600px"></div>
<div class="xb" style="left:1308px;top:531px"><svg width="14" height="14" fill="#dfdfdf"><use href="#gX"/></svg></div>
<svg class="pt" style="left:708px;top:535px" width="64" height="16" fill="#dfdfdf"><use href="#gL" x="0"/><use href="#ge_" x="16"/><use href="#gg_" x="32"/><use href="#gs_" x="48"/></svg>
<div class="ib" style="left:704px;top:559px;width:600px"></div>
<div class="xb" style="left:1308px;top:559px"><svg width="14" height="14" fill="#dfdfdf"><use href="#gX"/></svg></div>
<svg class="pt" style="left:708px;top:563px" width="144" height="16" fill="#dfdfdf"><use href="#gU" x="0"/><use href="#gn_" x="16"/><use href="#gd_" x="32"/><use href="#ge_" x="48"/><use href="#gr_" x="64"/><use href="#gw_" x="80"/><use href="#ge_" x="96"/><use href="#ga_" x="112"/><use href="#gr_" x="128"/></svg>
<div class="ib" style="left:704px;top:587px;width:600px"></div>
<div class="xb" style="left:1308px;top:587px"><svg width="14" height="14" fill="#dfdfdf"><use href="#gX"/></svg></div>
<svg class="pt" style="left:708px;top:591px" width="80" height="16" fill="#dfdfdf"><use href="#gS" x="0"/><use href="#go_" x="16"/><use href="#gc_" x="32"/><use href="#gk_" x="48"/><use href="#gs_" x="64"/></svg>
<div class="ib" style="left:704px;top:615px;width:600px"></div>
<div class="xb" style="left:1308px;top:615px"><svg width="14" height="14" fill="#dfdfdf"><use href="#gX"/></svg></div>
<svg class="pt" style="left:708px;top:619px" width="64" height="16" fill="#dfdfdf"><use href="#gF" x="0"/><use href="#ge_" x="16"/><use href="#ge_" x="32"/><use href="#gt_" x="48"/></svg>
<div class="ib" style="left:704px;top:643px;width:600px"></div>
<div class="xb" style="left:1308px;top:643px"><svg width="14" height="14" fill="#dfdfdf"><use href="#gX"/></svg></div>
<svg class="pt" style="left:708px;top:647px" width="80" height="16" fill="#dfdfdf"><use href="#gW" x="0"/><use href="#ga_" x="16"/><use href="#gi_" x="32"/><use href="#gs_" x="48"/><use href="#gt_" x="64"/></svg>
<div class="ib" style="left:704px;top:671px;width:600px"></div>
<div class="xb" style="left:1308px;top:671px"><svg width="14" height="14" fill="#dfdfdf"><use href="#gX"/></svg></div>
<svg class="pt" style="left:708px;top:675px" width="128" height="16" fill="#dfdfdf"><use href="#gS" x="0"/><use href="#gh_" x="16"/><use href="#go_" x="32"/><use href="#gu_" x="48"/><use href="#gl_" x="64"/><use href="#gd_" x="80"/><use href="#ge_" x="96"/><use href="#gr_" x="112"/></svg>
<div class="ib" style="left:704px;top:699px;width:600px"></div>
<div class="xb" style="left:1308px;top:699px"><svg width="14" height="14" fill="#dfdfdf"><use href="#gX"/></svg></div>
<svg class="pt" style="left:708px;top:703px" width="64" height="16" fill="#dfdfdf"><use href="#gB" x="0"/><use href="#ga_" x="16"/><use href="#gc_" x="32"/><use href="#gk_" x="48"/></svg>
<div class="ib" style="left:704px;top:727px;width:600px"></div>
<div class="xb" style="left:1308px;top:727px"><svg width="14" height="14" fill="#dfdfdf"><use href="#gX"/></svg></div>
<div class="ab" style="left:704px;top:755px;width:628px"></div>
<svg class="pt" style="left:898px;top:759px" width="240" height="16" fill="#dfdfdf"><use href="#gA" x="0"/><use href="#gd_" x="16"/><use href="#gd_" x="32"/><use href="#gE" x="64"/><use href="#gq_" x="80"/><use href="#gu_" x="96"/><use href="#gi_" x="112"/><use href="#gp_" x="128"/><use href="#gS" x="160"/><use href="#gl_" x="176"/><use href="#go_" x="192"/><use href="#gt_" x="208"/><use href="#gs_" x="224"/></svg>
<svg class="pt" style="left:704px;top:783px" width="208" height="16" fill="#ffffff"><use href="#gC" x="0"/><use href="#gl_" x="16"/><use href="#go_" x="32"/><use href="#gt_" x="48"/><use href="#gh_" x="64"/><use href="#gi_" x="80"/><use href="#gn_" x="96"/><use href="#gg_" x="112"/><use href="#gT" x="144"/><use href="#gy_" x="160"/><use href="#gp_" x="176"/><use href="#ge_" x="192"/></svg>
<div class="ib" style="left:704px;top:803px;width:600px"></div>
<div class="xb" style="left:1308px;top:803px"><svg width="14" height="14" fill="#dfdfdf"><use href="#gX"/></svg></div>
<svg class="pt" style="left:708px;top:807px" width="48" height="16" fill="#dfdfdf"><use href="#gH" x="0"/><use href="#ga_" x="16"/><use href="#gt_" x="32"/></svg>
<div class="ib" style="left:704px;top:831px;width:600px"></div>
<div class="xb" style="left:1308px;top:831px"><svg width="14" height="14" fill="#dfdfdf"><use href="#gX"/></svg></div>
<svg class="pt" style="left:708px;top:835px" width="96" height="16" fill="#dfdfdf"><use href="#gJ" x="0"/><use href="#ga_" x="16"/><use href="#gc_" x="32"/><use href="#gk_" x="48"/><use href="#ge_" x="64"/><use href="#gt_" x="80"/></svg>
<div class="ib" style="left:704px;top:859px;width:600px"></div>
<div class="xb" style="left:1308px;top:859px"><svg width="14" height="14" fill="#dfdfdf"><use href="#gX"/></svg></div>
<svg class="pt" style="left:708px;top:863px" width="80" height="16" fill="#dfdfdf"><use href="#gP" x="0"/><use href="#ga_" x="16"/><use href="#gn_" x="32"/><use href="#gt_" x="48"/><use href="#gs_" x="64"/></svg>
<div class="ib" style="left:704px;top:887px;width:600px"></div>
<div class="xb" style="left:1308px;top:887px"><svg width="14" height="14" fill="#dfdfdf"><use href="#gX"/></svg></div>
<svg class="pt" style="left:708px;top:891px" width="80" height="16" fill="#dfdfdf"><use href="#gS" x="0"/><use href="#go_" x="16"/><use href="#gc_" x="32"/><use href="#gk_" x="48"/><use href="#gs_" x="64"/></svg>
<div class="ib" style="left:704px;top:915px;width:600px"></div>
<div class="xb" style="left:1308px;top:915px"><svg width="14" height="14" fill="#dfdfdf"><use href="#gX"/></svg></div>
<svg class="pt" style="left:708px;top:919px" width="80" height="16" fill="#dfdfdf"><use href="#gS" x="0"/><use href="#gh_" x="16"/><use href="#go_" x="32"/><use href="#ge_" x="48"/><use href="#gs_" x="64"/></svg>
<div class="ib" style="left:704px;top:943px;width:600px"></div>
<div class="xb" style="left:1308px;top:943px"><svg width="14" height="14" fill="#dfdfdf"><use href="#gX"/></svg></div>
<svg class="pt" style="left:708px;top:947px" width="64" height="16" fill="#dfdfdf"><use href="#gC" x="0"/><use href="#go_" x="16"/><use href="#ga_" x="32"/><use href="#gt_" x="48"/></svg>
<div class="ib" style="left:704px;top:971px;width:600px"></div>
<div class="xb" style="left:1308px;top:971px"><svg width="14" height="14" fill="#dfdfdf"><use href="#gX"/></svg></div>
<svg class="pt" style="left:708px;top:975px" width="80" height="16" fill="#dfdfdf"><use href="#gS" x="0"/><use href="#gc_" x="16"/><use href="#ga_" x="32"/><use href="#gr_" x="48"/><use href="#gf_" x="64"/></svg>
<div class="ib" style="left:704px;top:999px;width:600px"></div>
<div class="xb" style="left:1308px;top:999px"><svg width="14" height="14" fill="#dfdfdf"><use href="#gX"/></svg></div>
<svg class="pt" style="left:708px;top:1003px" width="80" height="16" fill="#dfdfdf"><use href="#gS" x="0"/><use href="#gk_" x="16"/><use href="#gi_" x="32"/><use href="#gr_" x="48"/><use href="#gt_" x="64"/></svg>
<div class="ib" style="left:704px;top:1027px;width:600px"></div>
<div class="xb" style="left:1308px;top:1027px"><svg width="14" height="14" fill="#dfdfdf"><use href="#gX"/></svg></div>
<svg class="pt" style="left:708px;top:1031px" width="80" height="16" fill="#dfdfdf"><use href="#gD" x="0"/><use href="#gr_" x="16"/><use href="#ge_" x="32"/><use href="#gs_" x="48"/><use href="#gs_" x="64"/></svg>
<div class="ib" style="left:704px;top:1055px;width:600px"></div>
<div class="xb" style="left:1308px;top:1055px"><svg width="14" height="14" fill="#dfdfdf"><use href="#gX"/></svg></div>
<svg class="pt" style="left:708px;top:1059px" width="64" height="16" fill="#dfdfdf"><use href="#gR" x="0"/><use href="#gi_" x="16"/><use href="#gn_" x="32"/><use href="#gg_" x="48"/></svg>
<div class="ib" style="left:704px;top:1083px;width:600px"></div>
<div class="xb" style="left:1308px;top:1083px"><svg width="14" height="14" fill="#dfdfdf"><use href="#gX"/></svg></div>
<svg class="pt" style="left:708px;top:1087px" width="128" height="16" fill="#dfdfdf"><use href="#gN" x="0"/><use href="#ge_" x="16"/><use href="#gc_" x="32"/><use href="#gk_" x="48"/><use href="#gl_" x="64"/><use href="#ga_" x="80"/><use href="#gc_" x="96"/><use href="#ge_" x="112"/></svg>
<div class="ib" style="left:704px;top:1111px;width:600px"></div>
<div class="xb" style="left:1308px;top:1111px"><svg width="14" height="14" fill="#dfdfdf"><use href="#gX"/></svg></div>
<svg class="pt" style="left:708px;top:1115px" width="112" height="16" fill="#dfdfdf"><use href="#gE" x="0"/><use href="#ga_" x="16"/><use href="#gr_" x="32"/><use href="#gr_" x="48"/><use href="#gi_" x="64"/><use href="#gn_" x="80"/><use href="#gg_" x="96"/></svg>
<div class="ib" style="left:704px;top:1139px;width:600px"></div>
<div class="xb" style="left:1308px;top:1139px"><svg width="14" height="14" fill="#dfdfdf"><use href="#gX"/></svg></div>
<svg class="pt" style="left:708px;top:1143px" width="112" height="16" fill="#dfdfdf"><use href="#gA" x="0"/><use href="#gr_" x="16"/><use href="#gm_" x="32"/><use href="#gb_" x="48"/><use href="#ga_" x="64"/><use href="#gn_" x="80"/><use href="#gd_" x="96"/></svg>
<div class="ib" style="left:704px;top:1167px;width:600px"></div>
<div class="xb" style="left:1308px;top:1167px"><svg width="14" height="14" fill="#dfdfdf"><use href="#gX"/></svg></div>
<svg class="pt" style="left:708px;top:1171px" width="128" height="16" fill="#dfdfdf"><use href="#gB" x="0"/><use href="#gr_" x="16"/><use href="#ga_" x="32"/><use href="#gc_" x="48"/><use href="#ge_" x="64"/><use href="#gl_" x="80"/><use href="#ge_" x="96"/><use href="#gt_" x="112"/></svg>
<div class="ib" style="left:704px;top:1195px;width:600px"></div>
<div class="xb" style="left:1308px;top:1195px"><svg width="14" height="14" fill="#dfdfdf"><use href="#gX"/></svg></div>
<svg class="pt" style="left:708px;top:1199px" width="96" height="16" fill="#dfdfdf"><use href="#gG" x="0"/><use href="#gl_" x="16"/><use href="#go_" x="32"/><use href="#gv_" x="48"/><use href="#ge_" x="64"/><use href="#gs_" x="80"/></svg>
<div class="sbt" style="left:1332px;top:231px;height:921px"></div>
<div class="sb" style="left:1332px;top:231px;height:484px"></div>
<svg class="pt" style="left:1344px;top:231px" width="240" height="16" fill="#ffffff"><use href="#gC" x="0"/><use href="#go_" x="16"/><use href="#gl_" x="32"/><use href="#gl_" x="48"/><use href="#ge_" x="64"/><use href="#gc_" x="80"/><use href="#gt_" x="96"/><use href="#gi_" x="112"/><use href="#gb_" x="128"/><use href="#ge_" x="144"/><use href="#gT" x="176"/><use href="#gy_" x="192"/><use href="#gp_" x="208"/><use href="#ge_" x="224"/></svg>
<div class="ib" style="left:1344px;top:251px;width:600px"></div>
<div class="xb" style="left:1948px;top:251px"><svg width="14" height="14" fill="#dfdfdf"><use href="#gX"/></svg></div>
<svg class="pt" style="left:1348px;top:255px" width="64" height="16" fill="#dfdfdf"><use href="#gP" x="0"/><use href="#go_" x="16"/><use href="#ge_" x="32"/><use href="#gm_" x="48"/></svg>
<div class="ib" style="left:1344px;top:279px;width:600px"></div>
<div class="xb" style="left:1948px;top:279px"><svg width="14" height="14" fill="#dfdfdf"><use href="#gX"/></svg></div>
<svg class="pt" style="left:1348px;top:283px" width="160" height="16" fill="#dfdfdf"><use href="#gP" x="0"/><use href="#gh_" x="16"/><use href="#go_" x="32"/><use href="#gt_" x="48"/><use href="#go_" x="64"/><use href="#gg_" x="80"/><use href="#gr_" x="96"/><use href="#ga_" x="112"/><use href="#gp_" x="128"/><use href="#gh_" x="144"/></svg>
<div class="ib" style="left:1344px;top:307px;width:600px"></div>
<div class="xb" style="left:1948px;top:307px"><svg width="14" height="14" fill="#dfdfdf"><use href="#gX"/></svg></div>
<svg class="pt" style="left:1348px;top:311px" width="48" height="16" fill="#dfdfdf"><use href="#gV" x="0"/><use href="#gH" x="16"/><use href="#gS" x="32"/></svg>
<div class="ib" style="left:1344px;top:335px;width:600px"></div>
<div class="xb" style="left:1948px;top:335px"><svg width="14" height="14" fill="#dfdfdf"><use href="#gX"/></svg></div>
<svg class="pt" style="left:1348px;top:339px" width="128" height="16" fill="#dfdfdf"><use href="#gC" x="0"/><use href="#ga_" x="16"/><use href="#gs_" x="32"/><use href="#gs_" x="48"/><use href="#ge_" x="64"/><use href="#gt_" x="80"/><use href="#gt_" x="96"/><use href="#ge_" x="112"/></svg>
<div class="ib" style="left:1344px;top:363px;width:600px"></div>
<div class="xb" style="left:1948px;top:363px"><svg width="14" height="14" fill="#dfdfdf"><use href="#gX"/></svg></div>
<svg class="pt" style="left:1348px;top:367px" width="128" height="16" fill="#dfdfdf"><use href="#gC" x="0"/><use href="#gl_" x="16"/><use href="#go_" x="32"/><use href="#gt_" x="48"/><use href="#gh_" x="64"/><use href="#gi_" x="80"/><use href="#gn_" x="96"/><use href="#gg_" x="112"/></svg>
<div class="ib" style="left:1344px;top:391px;width:600px"></div>
<div class="xb" style="left:1948px;top:391px"><svg width="14" height="14" fill="#dfdfdf"><use href="#gX"/></svg></div>
<div class="ab" style="left:1344px;top:419px;width:628px"></div>
<svg class="pt" style="left:1506px;top:423px" width="304" height="16" fill="#dfdfdf"><use href="#gA" x="0"/><use href="#gd_" x="16"/><use href="#gd_" x="32"/><use href="#gC" x="64"/><use href="#go_" x="80"/><use href="#gl_" x="96"/><use href="#gl_" x="112"/><use href="#ge_" x="128"/><use href="#gc_" x="144"/><use href="#gt_" x="160"/><use href="#gi_" x="176"/><use href="#gb_" x="192"/><use href="#ge_" x="208"/><use href="#gT" x="240"/><use href="#gy_" x="256"/><use href="#gp_" x="272"/><use href="#ge_" x="288"/></svg>
<svg class="pt" style="left:1344px;top:447px" width="160" height="16" fill="#ffffff"><use href="#gC" x="0"/><use href="#go_" x="16"/><use href="#gl_" x="32"/><use href="#gl_" x="48"/><use href="#ge_" x="64"/><use href="#gc_" x="80"/><use href="#gt_" x="96"/><use href="#gi_" x="112"/><use href="#go_" x="128"/><use href="#gn_" x="144"/></svg>
<div class="ib" style="left:1344px;top:467px;width:600px"></div>
<div class="xb" style="left:1948px;top:467px"><svg width="14" height="14" fill="#dfdfdf"><use href="#gX"/></svg></div>
<div class="ib" style="left:1344px;top:495px;width:600px"></div>
<div class="xb" style="left:1948px;top:495px"><svg width="14" height="14" fill="#dfdfdf"><use href="#gX"/></svg></div>
<div class="ab" style="left:1344px;top:523px;width:628px"></div>
<svg class="pt" style="left:1546px;top:527px" width="224" height="16" fill="#dfdfdf"><use href="#gA" x="0"/><use href="#gd_" x="16"/><use href="#gd_" x="32"/><use href="#gC" x="64"/><use href="#go_" x="80"/><use href="#gl_" x="96"/><use href="#gl_" x="112"/><use href="#ge_" x="128"/><use href="#gc_" x="144"/><use href="#gt_" x="160"/><use href="#gi_" x="176"/><use href="#go_" x="192"/><use href="#gn_" x="208"/></svg>
<svg class="pt" style="left:1344px;top:551px" width="240" height="16" fill="#ffffff"><use href="#gC" x="0"/><use href="#go_" x="16"/><use href="#gn_" x="32"/><use href="#gs_" x="48"/><use href="#gu_" x="64"/><use href="#gm_" x="80"/><use href="#ga_" x="96"/><use href="#gb_" x="112"/><use href="#gl_" x="128"/><use href="#ge_" x="144"/><use href="#gT" x="176"/><use href="#gy_" x="192"/><use href="#gp_" x="208"/><use href="#ge_" x="224"/></svg>
<div class="ib" style="left:1344px;top:571px;width:600px"></div>
<div class="xb" style="left:1948px;top:571px"><svg width="14" height="14" fill="#dfdfdf"><use href="#gX"/></svg></div>
<svg class="pt" style="left:1348px;top:575px" width="80" height="16" fill="#dfdfdf"><use href="#gD" x="0"/><use href="#gr_" x="16"/><use href="#gi_" x="32"/><use href="#gn_" x="48"/><use href="#gk_" x="64"/></svg>
<div class="ib" style="left:1344px;top:599px;width:600px"></div>
<div class="xb" style="left:1948px;top:599px"><svg width="14" height="14" fill="#dfdfdf"><use href="#gX"/></svg></div>
<svg class="pt" style="left:1348px;top:603px" width="64" height="16" fill="#dfdfdf"><use href="#gM" x="0"/><use href="#ge_" x="16"/><use href="#ga_" x="32"/><use href="#gl_" x="48"/></svg>
<div class="ib" style="left:1344px;top:627px;width:600px"></div>
<div class="xb" style="left:1948px;top:627px"><svg width="14" height="14" fill="#dfdfdf"><use href="#gX"/></svg></div>
<svg class="pt" style="left:1348px;top:631px" width="64" height="16" fill="#dfdfdf"><use href="#gD" x="0"/><use href="#gr_" x="16"/><use href="#gu_" x="32"/><use href="#gg_" x="48"/></svg>
<div class="ib" style="left:1344px;top:655px;width:600px"></div>
<div class="xb" style="left:1948px;top:655px"><svg width="14" height="14" fill="#dfdfdf"><use href="#gX"/></svg></div>
<svg class="pt" style="left:1348px;top:659px" width="80" height="16" fill="#dfdfdf"><use href="#gS" x="0"/><use href="#gn_" x="16"/><use href="#ga_" x="32"/><use href="#gc_" x="48"/><use href="#gk_" x="64"/></svg>
<div class="ib" style="left:1344px;top:683px;width:600px"></div>
<div class="xb" style="left:1948px;top:683px"><svg width="14" height="14" fill="#dfdfdf"><use href="#gX"/></svg></div>
<svg class="pt" style="left:1348px;top:687px" width="80" height="16" fill="#dfdfdf"><use href="#gF" x="0"/><use href="#gr_" x="16"/><use href="#gu_" x="32"/><use href="#gi_" x="48"/><use href="#gt_" x="64"/></svg>
<div class="ib" style="left:1344px;top:711px;width:600px"></div>
<div class="xb" style="left:1948px;top:711px"><svg width="14" height="14" fill="#dfdfdf"><use href="#gX"/></svg></div>
<svg class="pt" style="left:1348px;top:715px" width="144" height="16" fill="#dfdfdf"><use href="#gV" x="0"/><use href="#ge_" x="16"/><use href="#gg_" x="32"/><use href="#ge_" x="48"/><use href="#gt_" x="64"/><use href="#ga_" x="80"/><use href="#gb_" x="96"/><use href="#gl_" x="112"/><use href="#ge_" x="128"/></svg>
<div class="ib" style="left:1344px;top:739px;width:600px"></div>
<div class="xb" style="left:1948px;top:739px"><svg width="14" height="14" fill="#dfdfdf"><use href="#gX"/></svg></div>
<svg class="pt" style="left:1348px;top:743px" width="96" height="16" fill="#dfdfdf"><use href="#gP" x="0"/><use href="#ga_" x="16"/><use href="#gs_" x="32"/><use href="#gt_" x="48"/><use href="#gr_" x="64"/><use href="#gy_" x="80"/></svg>
<div class="ib" style="left:1344px;top:767px;width:600px"></div>
<div class="xb" style="left:1948px;top:767px"><svg width="14" height="14" fill="#dfdfdf"><use href="#gX"/></svg></div>
<svg class="pt" style="left:1348px;top:771px" width="80" height="16" fill="#dfdfdf"><use href="#gB" x="0"/><use href="#gr_" x="16"/><use href="#ge_" x="32"/><use href="#ga_" x="48"/><use href="#gd_" x="64"/></svg>
<div class="ib" style="left:1344px;top:795px;width:600px"></div>
<div class="xb" style="left:1948px;top:795px"><svg width="14" height="14" fill="#dfdfdf"><use href="#gX"/></svg></div>
<svg class="pt" style="left:1348px;top:799px" width="64" height="16" fill="#dfdfdf"><use href="#gS" x="0"/><use href="#go_" x="16"/><use href="#gd_" x="32"/><use href="#ga_" x="48"/></svg>
<div class="ib" style="left:1344px;top:823px;width:600px"></div>
<div class="xb" style="left:1948px;top:823px"><svg width="14" height="14" fill="#dfdfdf"><use href="#gX"/></svg></div>
<svg class="pt" style="left:1348px;top:827px" width="64" height="16" fill="#dfdfdf"><use href="#gB" x="0"/><use href="#ge_" x="16"/><use href="#ge_" x="32"/><use href="#gr_" x="48"/></svg>
<div class="ib" style="left:1344px;top:851px;width:600px"></div>
<div class="xb" style="left:1948px;top:851px"><svg width="14" height="14" fill="#dfdfdf"><use href="#gX"/></svg></div>
<svg class="pt" style="left:1348px;top:855px" width="64" height="16" fill="#dfdfdf"><use href="#gW" x="0"/><use href="#gi_" x="16"/><use href="#gn_" x="32"/><use href="#ge_" x="48"/></svg>
<div class="ib" style="left:1344px;top:879px;width:600px"></div>
<div class="xb" style="left:1948px;top:879px"><svg width="14" height="14" fill="#dfdfdf"><use href="#gX"/></svg></div>
<svg class="pt" style="left:1348px;top:883px" width="96" height="16" fill="#dfdfdf"><use href="#gS" x="0"/><use href="#gp_" x="16"/><use href="#gi_" x="32"/><use href="#gr_" x="48"/><use href="#gi_" x="64"/><use href="#gt_" x="80"/></svg>
<div class="ib" style="left:1344px;top:907px;width:600px"></div>
<div class="xb" style="left:1948px;top:907px"><svg width="14" height="14" fill="#dfdfdf"><use href="#gX"/></svg></div>
<svg class="pt" style="left:1348px;top:911px" width="96" height="16" fill="#dfdfdf"><use href="#gC" x="0"/><use href="#gh_" x="16"/><use href="#ge_" x="32"/><use href="#ge_" x="48"/><use href="#gs_" x="64"/><use href="#ge_" x="80"/></svg>
<div class="ib" style="left:1344px;top:935px;width:600px"></div>
<div class="xb" style="left:1948px;top:935px"><svg width="14" height="14" fill="#dfdfdf"><use href="#gX"/></svg></div>
<svg class="pt" style="left:1348px;top:939px" width="80" height="16" fill="#dfdfdf"><use href="#gC" x="0"/><use href="#ga_" x="16"/><use href="#gn_" x="32"/><use href="#gd_" x="48"/><use href="#gy_" x="64"/></svg>
<div class="ib" style="left:1344px;top:963px;width:600px"></div>
<div class="xb" style="left:1948px;top:963px"><svg width="14" height="14" fill="#dfdfdf"><use href="#gX"/></svg></div>
<svg class="pt" style="left:1348px;top:967px" width="144" height="16" fill="#dfdfdf"><use href="#gC" x="0"/><use href="#gh_" x="16"/><use href="#go_" x="32"/><use href="#gc_" x="48"/><use href="#go_" x="64"/><use href="#gl_" x="80"/><use href="#ga_" x="96"/><use href="#gt_" x="112"/><use href="#ge_" x="128"/></svg>
<div class="ib" style="left:1344px;top:991px;width:600px"></div>
<div class="xb" style="left:1948px;top:991px"><svg width="14" height="14" fill="#dfdfdf"><use href="#gX"/></svg></div>
<svg class="pt" style="left:1348px;top:995px" width="96" height="16" fill="#dfdfdf"><use href="#gC" x="0"/><use href="#go_" x="16"/><use href="#gf_" x="32"/><use href="#gf_" x="48"/><use href="#ge_" x="64"/><use href="#ge_" x="80"/></svg>
<div class="ib" style="left:1344px;top:1019px;width:600px"></div>
<div class="xb" style="left:1948px;top:1019px"><svg width="14" height="14" fill="#dfdfdf"><use href="#gX"/></svg></div>
<svg class="pt" style="left:1348px;top:1023px" width="48" height="16" fill="#dfdfdf"><use href="#gT" x="0"/><use href="#ge_" x="16"/><use href="#ga_" x="32"/></svg>
<div class="ib" style="left:1344px;top:1047px;width:600px"></div>
<div class="xb" style="left:1948px;top:1047px"><svg width="14" height="14" fill="#dfdfdf"><use href="#gX"/></svg></div>
<svg class="pt" style="left:1348px;top:1051px" width="64" height="16" fill="#dfdfdf"><use href="#gM" x="0"/><use href="#ge_" x="16"/><use href="#ga_" x="32"/><use href="#gt_" x="48"/></svg>
<div class="ib" style="left:1344px;top:1075px;width:600px"></div>
<div class="xb" style="left:1948px;top:1075px"><svg width="14" height="14" fill="#dfdfdf"><use href="#gX"/></svg></div>
<div class="ab" style="left:1344px;top:1103px;width:628px"></div>
<svg class="pt" style="left:1506px;top:1107px" width="304" height="16" fill="#dfdfdf"><use href="#gA" x="0"/><use href="#gd_" x="16"/><use href="#gd_" x="32"/><use href="#gC" x="64"/><use href="#go_" x="80"/><use href="#gn_" x="96"/><use href="#gs_" x="112"/><use href="#gu_" x="128"/><use href="#gm_" x="144"/><use href="#ga_" x="160"/><use href="#gb_" x="176"/><use href="#gl_" x="192"/><use href="#ge_" x="208"/><use href="#gT" x="240"/><use href="#gy_" x="256"/><use href="#gp_" x="272"/><use href="#ge_" x="288"/></svg>
<svg class="pt" style="left:1344px;top:1131px" width="144" height="16" fill="#ffffff"><use href="#gP" x="0"/><use href="#gr_" x="16"/><use href="#go_" x="32"/><use href="#gp_" x="48"/><use href="#gT" x="80"/><use href="#gy_" x="96"/><use href="#gp_" x="112"/><use href="#ge_" x="128"/></svg>
<div class="ib" style="left:1344px;top:1151px;width:600px"></div>
<div class="xb" style="left:1948px;top:1151px"><svg width="14" height="14" fill="#dfdfdf"><use href="#gX"/></svg></div>
<div class="ib" style="left:1344px;top:1179px;width:600px"></div>
<div class="xb" style="left:1948px;top:1179px"><svg width="14" height="14" fill="#dfdfdf"><use href="#gX"/></svg></div>
<div class="sbt" style="left:1972px;top:231px;height:921px"></div>
<div class="sb" style="left:1972px;top:231px;height:728px"></div>
</div></div>
<div style="left:62px;top:1158px;width:1920px;height:28px;border:2px solid #e014ae;background:#121212"></div>
<div style="left:986px;top:1161px;width:72px;height:22px;background:rgba(255,255,255,0.02)"></div>
<svg class="pt" style="left:990px;top:1164px" width="64" height="16" fill="#dfdfdf"><use href="#gB" x="0"/><use href="#ga_" x="16"/><use href="#gc_" x="32"/><use href="#gk_" x="48"/></svg>
<svg class="pt" style="left:806px;top:146px" width="432" height="16" fill="#ffffff"><use href="#gG" x="0"/><use href="#gA" x="16"/><use href="#gM" x="32"/><use href="#gE" x="48"/><use href="#gE" x="80"/><use href="#gD" x="96"/><use href="#gI" x="112"/><use href="#gT" x="128"/><use href="#gO" x="144"/><use href="#gR" x="160"/><use href="#gO" x="192"/><use href="#gP" x="208"/><use href="#gT" x="224"/><use href="#gI" x="240"/><use href="#gO" x="256"/><use href="#gN" x="272"/><use href="#gS" x="288"/><use href="#gM" x="320"/><use href="#gA" x="336"/><use href="#gN" x="352"/><use href="#gA" x="368"/><use href="#gG" x="384"/><use href="#gE" x="400"/><use href="#gR" x="416"/></svg>
</body></html>
